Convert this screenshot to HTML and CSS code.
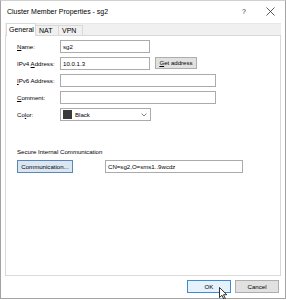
FILE: index.html
```html
<!DOCTYPE html>
<html>
<head>
<meta charset="utf-8">
<link rel="stylesheet" href="styles.css">
</head>
<body>
<div class="window">
  <div class="titlebar">
    <span class="title">Cluster Member Properties - sg2</span>
    <span class="help">?</span>
    <svg class="close" width="9" height="9" viewBox="0 0 9 9"><path d="M0.5 0.5L8.5 8.5M8.5 0.5L0.5 8.5" stroke="#333" stroke-width="0.8" fill="none"/></svg>
  </div>
  <div class="tabs">
    <div class="tab active">General</div>
    <div class="tab">NAT</div>
    <div class="tab">VPN</div>
  </div>
  <div class="panel">
    <div class="form">
      <label class="lbl"><u>N</u>ame:</label>
      <div class="field"><div class="input w90">sg2</div></div>
      <label class="lbl">IPv4 <u>A</u>ddress:</label>
      <div class="field"><div class="input w90">10.0.1.3</div><div class="btn getaddr"><u>G</u>et address</div></div>
      <label class="lbl"><u>I</u>Pv6 Address:</label>
      <div class="field"><div class="input w156"></div></div>
      <label class="lbl"><u>C</u>omment:</label>
      <div class="field"><div class="input w156"></div></div>
      <label class="lbl">Co<u>l</u>or:</label>
      <div class="field">
        <div class="select">
          <span class="swatch"></span><span class="seltext">Black</span>
          <svg class="chev" width="6" height="4" viewBox="0 0 6 4"><path d="M0.5 0.5L3 3L5.5 0.5" stroke="#666" stroke-width="0.8" fill="none"/></svg>
        </div>
      </div>
    </div>
    <div class="section">Secure Internal Communication</div>
    <div class="sicrow">
      <div class="btn focus commbtn">Communication...</div>
      <div class="input sic">CN=sg2,O=sms1..9wcdz</div>
    </div>
  </div>
  <div class="footer">
    <div class="btn default okbtn">OK</div>
    <div class="btn cancel">Cancel</div>
  </div>
  <svg class="cursor" width="9" height="13" viewBox="0 0 9 13"><path d="M0.5 0.5L0.5 10.5L3 8.3L4.8 12.2L6.3 11.5L4.5 7.7L7.8 7.7Z" fill="#fff" stroke="#000" stroke-width="0.8" stroke-linejoin="round"/></svg>
</div>
</body>
</html>
```
FILE: styles.css
```css
html, body {
  margin: 0;
  padding: 0;
  background: #fff;
}
body {
  font-family: "Liberation Sans", Arial, sans-serif;
  font-size: 6.1px;
  color: #000;
}
.window {
  position: relative;
  width: 286px;
  height: 299px;
  box-sizing: border-box;
  border: 1px solid #a3a3a3;
  border-top-color: #d0d0d0;
  background: #fff;
  display: flex;
  flex-direction: column;
}
.titlebar {
  height: 21px;
  display: flex;
  align-items: center;
  padding-left: 6px;
  padding-right: 10px;
  box-sizing: border-box;
}
.title {
  flex: 1;
  font-size: 7px;
}
.help {
  font-size: 7px;
  margin-right: 20px;
  color: #333;
}
.close {
  display: block;
}
.tabs {
  margin: 1px 4px 0;
  height: 12px;
  background: #f0f0f0;
  display: flex;
  align-items: flex-end;
  padding-left: 1px;
  border-top: 1px solid #e8e8e8;
  box-sizing: border-box;
  font-size: 7px;
}
.tab {
  height: 10px;
  line-height: 10px;
  padding: 0 3px;
  border: 1px solid #d9d9d9;
  border-bottom: none;
  margin-left: -1px;
  box-sizing: border-box;
  background: #f0f0f0;
}
.tab:nth-child(2) { width: 24px; padding-left: 3px; }
.tab:nth-child(3) { width: 25px; padding-left: 3px; }
.tab.active {
  background: #fff;
  height: 13px;
  line-height: 11px;
  margin-bottom: -1px;
  width: 30px;
  padding-left: 2px;
  position: relative;
  z-index: 1;
  margin-left: 0;
}
.panel {
  margin: 0 4px;
  height: 241px;
  border: 1px solid #d9d9d9;
  box-sizing: border-box;
  padding: 4px 0 0 11px;
  background: #fff;
}
.form {
  display: grid;
  grid-template-columns: 43px 1fr;
  row-gap: 4px;
  align-items: center;
}
.lbl {
  line-height: 13px;
  white-space: nowrap;
}
.field {
  display: flex;
  align-items: center;
  height: 13px;
}
.input {
  height: 13px;
  box-sizing: border-box;
  border: 1px solid #ababab;
  background: #fff;
  padding-left: 2px;
  line-height: 11px;
  white-space: nowrap;
  overflow: hidden;
}
.w90 { width: 90px; }
.w156 { width: 156px; }
.btn {
  height: 13px;
  box-sizing: border-box;
  border: 1px solid #adadad;
  background: #e1e1e1;
  line-height: 11px;
  text-align: center;
  white-space: nowrap;
}
.getaddr {
  width: 42px;
  margin-left: 5px;
  height: 12px;
  line-height: 10px;
  margin-top: -1px;
}
.select {
  width: 91px;
  height: 13px;
  box-sizing: border-box;
  border: 1px solid #ababab;
  display: flex;
  align-items: center;
  padding-left: 2px;
  padding-right: 3px;
}
.swatch {
  width: 9px;
  height: 9px;
  background: #3a3a3a;
  display: block;
}
.seltext {
  margin-left: 3px;
  flex: 1;
}
.chev { display: block; }
.section {
  margin-top: 26px;
  line-height: 9px;
}
.sicrow {
  display: flex;
  margin-top: 4px;
  align-items: center;
}
.focus {
  background: #dae6f2;
  border-color: #5b86b5;
}
.commbtn {
  width: 56px;
}
.sic {
  margin-left: 32px;
  width: 138px;
}
.footer {
  display: flex;
  justify-content: flex-end;
  gap: 4px;
  padding: 4px 6px 0 0;
}
.okbtn, .cancel {
  width: 44px;
}
.default {
  background: #e5f1fb;
  border-color: #3d8ad8;
}
.cursor {
  position: absolute;
  left: 218px;
  top: 286px;
}
```
